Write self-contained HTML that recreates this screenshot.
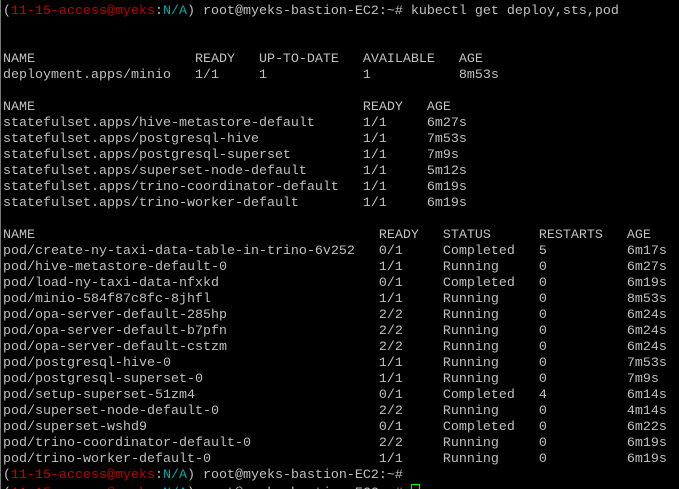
<!DOCTYPE html>
<html><head><style>
html,body{margin:0;padding:0;background:#000;width:679px;height:489px;overflow:hidden}
pre{margin:0;padding:4px 0 0 2px;font-family:"Liberation Mono",monospace;font-size:13.33px;line-height:16px;color:#c0c0c0;border-left:1px solid #777;height:489px;box-sizing:border-box}
.r{color:#c00000}.c{color:#00a8a8}
.cur{display:inline-block;width:7px;height:13px;border:1px solid #00ff00;vertical-align:-3px}
</style></head><body><pre>(<span class="r">11-15-access@myeks</span>:<span class="c">N/A</span>) root@myeks-bastion-EC2:~# kubectl get deploy,sts,pod


NAME                    READY   UP-TO-DATE   AVAILABLE   AGE
deployment.apps/minio   1/1     1            1           8m53s

NAME                                         READY   AGE
statefulset.apps/hive-metastore-default      1/1     6m27s
statefulset.apps/postgresql-hive             1/1     7m53s
statefulset.apps/postgresql-superset         1/1     7m9s
statefulset.apps/superset-node-default       1/1     5m12s
statefulset.apps/trino-coordinator-default   1/1     6m19s
statefulset.apps/trino-worker-default        1/1     6m19s

NAME                                           READY   STATUS      RESTARTS   AGE
pod/create-ny-taxi-data-table-in-trino-6v252   0/1     Completed   5          6m17s
pod/hive-metastore-default-0                   1/1     Running     0          6m27s
pod/load-ny-taxi-data-nfxkd                    0/1     Completed   0          6m19s
pod/minio-584f87c8fc-8jhfl                     1/1     Running     0          8m53s
pod/opa-server-default-285hp                   2/2     Running     0          6m24s
pod/opa-server-default-b7pfn                   2/2     Running     0          6m24s
pod/opa-server-default-cstzm                   2/2     Running     0          6m24s
pod/postgresql-hive-0                          1/1     Running     0          7m53s
pod/postgresql-superset-0                      1/1     Running     0          7m9s
pod/setup-superset-51zm4                       0/1     Completed   4          6m14s
pod/superset-node-default-0                    2/2     Running     0          4m14s
pod/superset-wshd9                             0/1     Completed   0          6m22s
pod/trino-coordinator-default-0                2/2     Running     0          6m19s
pod/trino-worker-default-0                     1/1     Running     0          6m19s
(<span class="r">11-15-access@myeks</span>:<span class="c">N/A</span>) root@myeks-bastion-EC2:~#
(<span class="r">11-15-access@myeks</span>:<span class="c">N/A</span>) root@myeks-bastion-EC2:~# <span class="cur"></span></pre></body></html>
